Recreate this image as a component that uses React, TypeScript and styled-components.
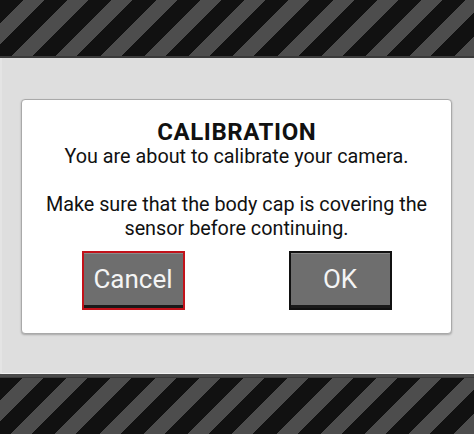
import React from "react";
import styled, { createGlobalStyle } from "styled-components";

const Global = createGlobalStyle`
  html, body {
    margin: 0;
    padding: 0;
    width: 474px;
    height: 434px;
    overflow: hidden;
    background: #dedede;
  }
  * { box-sizing: border-box; }
`;

const Screen = styled.div`
  width: 474px;
  height: 434px;
  display: flex;
  flex-direction: column;
  font-family: Roboto, "Liberation Sans", sans-serif;
`;

// Diagonal black/grey warning stripes above and below the dialog panel.
const HazardBand = styled.div<{ $edge: "top" | "bottom"; $height: number }>`
  flex: 0 0 ${(p) => p.$height}px;
  background: repeating-linear-gradient(
    135deg,
    #111111 0px,
    #111111 16.5px,
    #4d4d4d 16.5px,
    #4d4d4d 31.3px
  );
  ${(p) =>
    p.$edge === "top"
      ? `border-bottom: 2px solid #3a3a3a;`
      : `border-top: 3px solid #4a4a4a; box-shadow: inset 0 1px 0 #3a3a3a;`}
`;

const Panel = styled.div`
  flex: 1 1 auto;
  background: #dedede;
  border-left: 2px solid #e4e4e4;
  border-bottom: 1px solid #f2f2f2;
  padding: 41px 22px 39px 19px;
  display: flex;
`;

const Card = styled.div`
  flex: 1;
  background: #ffffff;
  border: 1px solid #a9a9a9;
  border-radius: 4px;
  box-shadow: 0 1px 2px rgba(0, 0, 0, 0.25);
  padding: 20px 0 0;
  display: flex;
  flex-direction: column;
  align-items: center;
  color: #111;
`;

const Title = styled.div`
  font-size: 24px;
  line-height: 25px;
  font-weight: 700;
  letter-spacing: 0.6px;
  padding-left: 0.6px;
`;

const Message = styled.div`
  font-size: 19.8px;
  line-height: 24px;
  text-align: center;
  white-space: pre-line;
`;

const ButtonRow = styled.div`
  margin-top: 10px;
  display: flex;
  gap: 104px;
`;

const DialogButton = styled.button<{ $focused?: boolean }>`
  width: 103px;
  height: 59px;
  padding: 0 0 3px;
  border: 2px solid ${(p) => (p.$focused ? "#c2121a" : "#111111")};
  background: #6e6e6e;
  box-shadow: inset 0 -3px 0 #1a1a1a, inset 0 1px 0 #8a8a8a;
  color: #f4f4f4;
  font-family: Roboto, "Liberation Sans", sans-serif;
  font-size: 26px;
  cursor: pointer;
`;

export default function App() {
  return (
    <Screen>
      <Global />
      <HazardBand $edge="top" $height={58} />
      <Panel>
        <Card>
          <Title>CALIBRATION</Title>
          <Message>
            {"You are about to calibrate your camera.\n\nMake sure that the body cap is covering the\nsensor before continuing."}
          </Message>
          <ButtonRow>
            <DialogButton $focused>Cancel</DialogButton>
            <DialogButton>OK</DialogButton>
          </ButtonRow>
        </Card>
      </Panel>
      <HazardBand $edge="bottom" $height={60} />
    </Screen>
  );
}
